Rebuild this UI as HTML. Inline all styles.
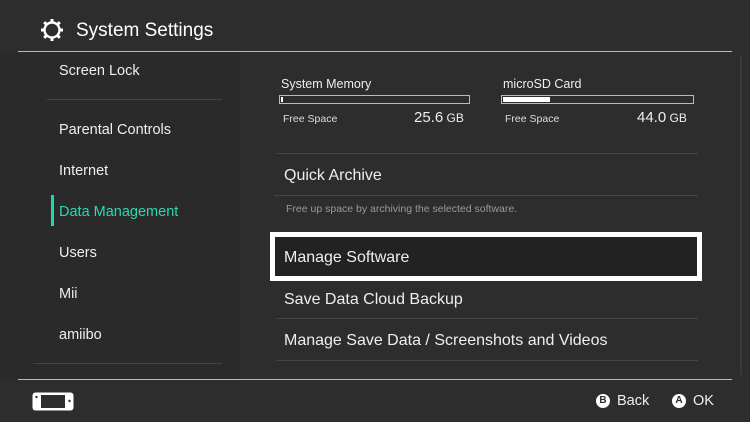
<!DOCTYPE html><html><head><style>
body{margin:0;width:750px;height:422px;background:#2d2d2d;font-family:"Liberation Sans",sans-serif;color:#fff;position:relative;overflow:hidden}
.a{position:absolute}
.side{left:0;top:52px;width:240px;height:327px;background:#2a2a2a}
.nav{left:59px;font-size:14.5px;color:#eee}
.hl{height:1px;background:#444}
.item{left:284px;font-size:16px;color:#eee}
</style></head><body>
<div class="a side"></div>
<svg class="a" style="left:38px;top:16px" width="28" height="28" viewBox="0 0 28 28"><circle cx="14" cy="14" r="7.5" fill="none" stroke="#fff" stroke-width="2.4"/><g stroke="#fff" stroke-width="3" stroke-linecap="butt"><line x1="14" y1="3" x2="14" y2="6.5"/><line x1="14" y1="21.5" x2="14" y2="25"/><line x1="3" y1="14" x2="6.5" y2="14"/><line x1="21.5" y1="14" x2="25" y2="14"/><line x1="6.2" y1="6.2" x2="8.7" y2="8.7"/><line x1="19.3" y1="19.3" x2="21.8" y2="21.8"/><line x1="21.8" y1="6.2" x2="19.3" y2="8.7"/><line x1="8.7" y1="19.3" x2="6.2" y2="21.8"/></g></svg>
<div class="a" style="left:76px;top:20px;font-size:19px">System Settings</div>
<div class="a" style="left:18px;top:51px;width:714px;height:1px;background:#bbb"></div>
<div class="a" style="left:18px;top:379px;width:714px;height:1px;background:#bbb"></div>
<div class="a" style="left:740px;top:55px;width:2px;height:320px;background:#3a3a3a"></div>
<div class="a nav" style="top:63px">Screen Lock</div>
<div class="a hl" style="left:47px;top:99px;width:175px"></div>
<div class="a nav" style="top:122px">Parental Controls</div>
<div class="a nav" style="top:163px">Internet</div>
<div class="a" style="left:51px;top:195px;width:3px;height:31px;background:#1fd6b0"></div>
<div class="a nav" style="top:204px;color:#2ad8b4">Data Management</div>
<div class="a nav" style="top:245px">Users</div>
<div class="a nav" style="top:286px">Mii</div>
<div class="a nav" style="top:327px">amiibo</div>
<div class="a hl" style="left:33px;top:363px;width:189px"></div>
<div class="a" style="left:281px;top:77px;font-size:12.5px;color:#eee">System Memory</div>
<div class="a" style="left:279px;top:95px;width:189px;height:7px;border:1px solid #bbb"></div>
<div class="a" style="left:281px;top:97px;width:2px;height:5px;background:#fff"></div>
<div class="a" style="left:283px;top:113px;font-size:10.5px;color:#ddd">Free Space</div>
<div class="a" style="left:414px;top:109px;font-size:15px;color:#eee">25.6<span style="font-size:12px"> GB</span></div>
<div class="a" style="left:503px;top:77px;font-size:12.5px;color:#eee">microSD Card</div>
<div class="a" style="left:501px;top:95px;width:191px;height:7px;border:1px solid #bbb"></div>
<div class="a" style="left:503px;top:97px;width:47px;height:5px;background:#fff"></div>
<div class="a" style="left:505px;top:113px;font-size:10.5px;color:#ddd">Free Space</div>
<div class="a" style="left:637px;top:109px;font-size:15px;color:#eee">44.0<span style="font-size:12px"> GB</span></div>
<div class="a hl" style="left:276px;top:153px;width:422px"></div>
<div class="a item" style="top:167px">Quick Archive</div>
<div class="a hl" style="left:274px;top:195px;width:424px"></div>
<div class="a" style="left:286px;top:203px;font-size:10.5px;color:#999">Free up space by archiving the selected software.</div>
<div class="a" style="left:270px;top:232px;width:422px;height:39px;border:5px solid #fff;background:#222"></div>
<div class="a item" style="top:249px">Manage Software</div>
<div class="a item" style="top:291px">Save Data Cloud Backup</div>
<div class="a hl" style="left:276px;top:318px;width:422px"></div>
<div class="a item" style="top:332px">Manage Save Data / Screenshots and Videos</div>
<div class="a hl" style="left:276px;top:360px;width:422px"></div>
<svg class="a" style="left:32px;top:392px" width="42" height="19" viewBox="0 0 42 19"><rect x="0.5" y="0.5" width="41" height="18" rx="3" fill="#fff"/><rect x="9" y="3" width="24" height="13" fill="#2d2d2d"/><circle cx="4.5" cy="5" r="1.2" fill="#2d2d2d"/><circle cx="37.5" cy="9" r="1.2" fill="#2d2d2d"/></svg>
<div class="a" style="left:596px;top:394px;width:14px;height:14px;border-radius:50%;background:#fff;color:#2d2d2d;font-size:10px;font-weight:bold;text-align:center;line-height:14px">B</div>
<div class="a" style="left:617px;top:393px;font-size:14.5px;color:#eee">Back</div>
<div class="a" style="left:672px;top:394px;width:14px;height:14px;border-radius:50%;background:#fff;color:#2d2d2d;font-size:10px;font-weight:bold;text-align:center;line-height:14px">A</div>
<div class="a" style="left:693px;top:393px;font-size:14.5px;color:#eee">OK</div>
</body></html>
